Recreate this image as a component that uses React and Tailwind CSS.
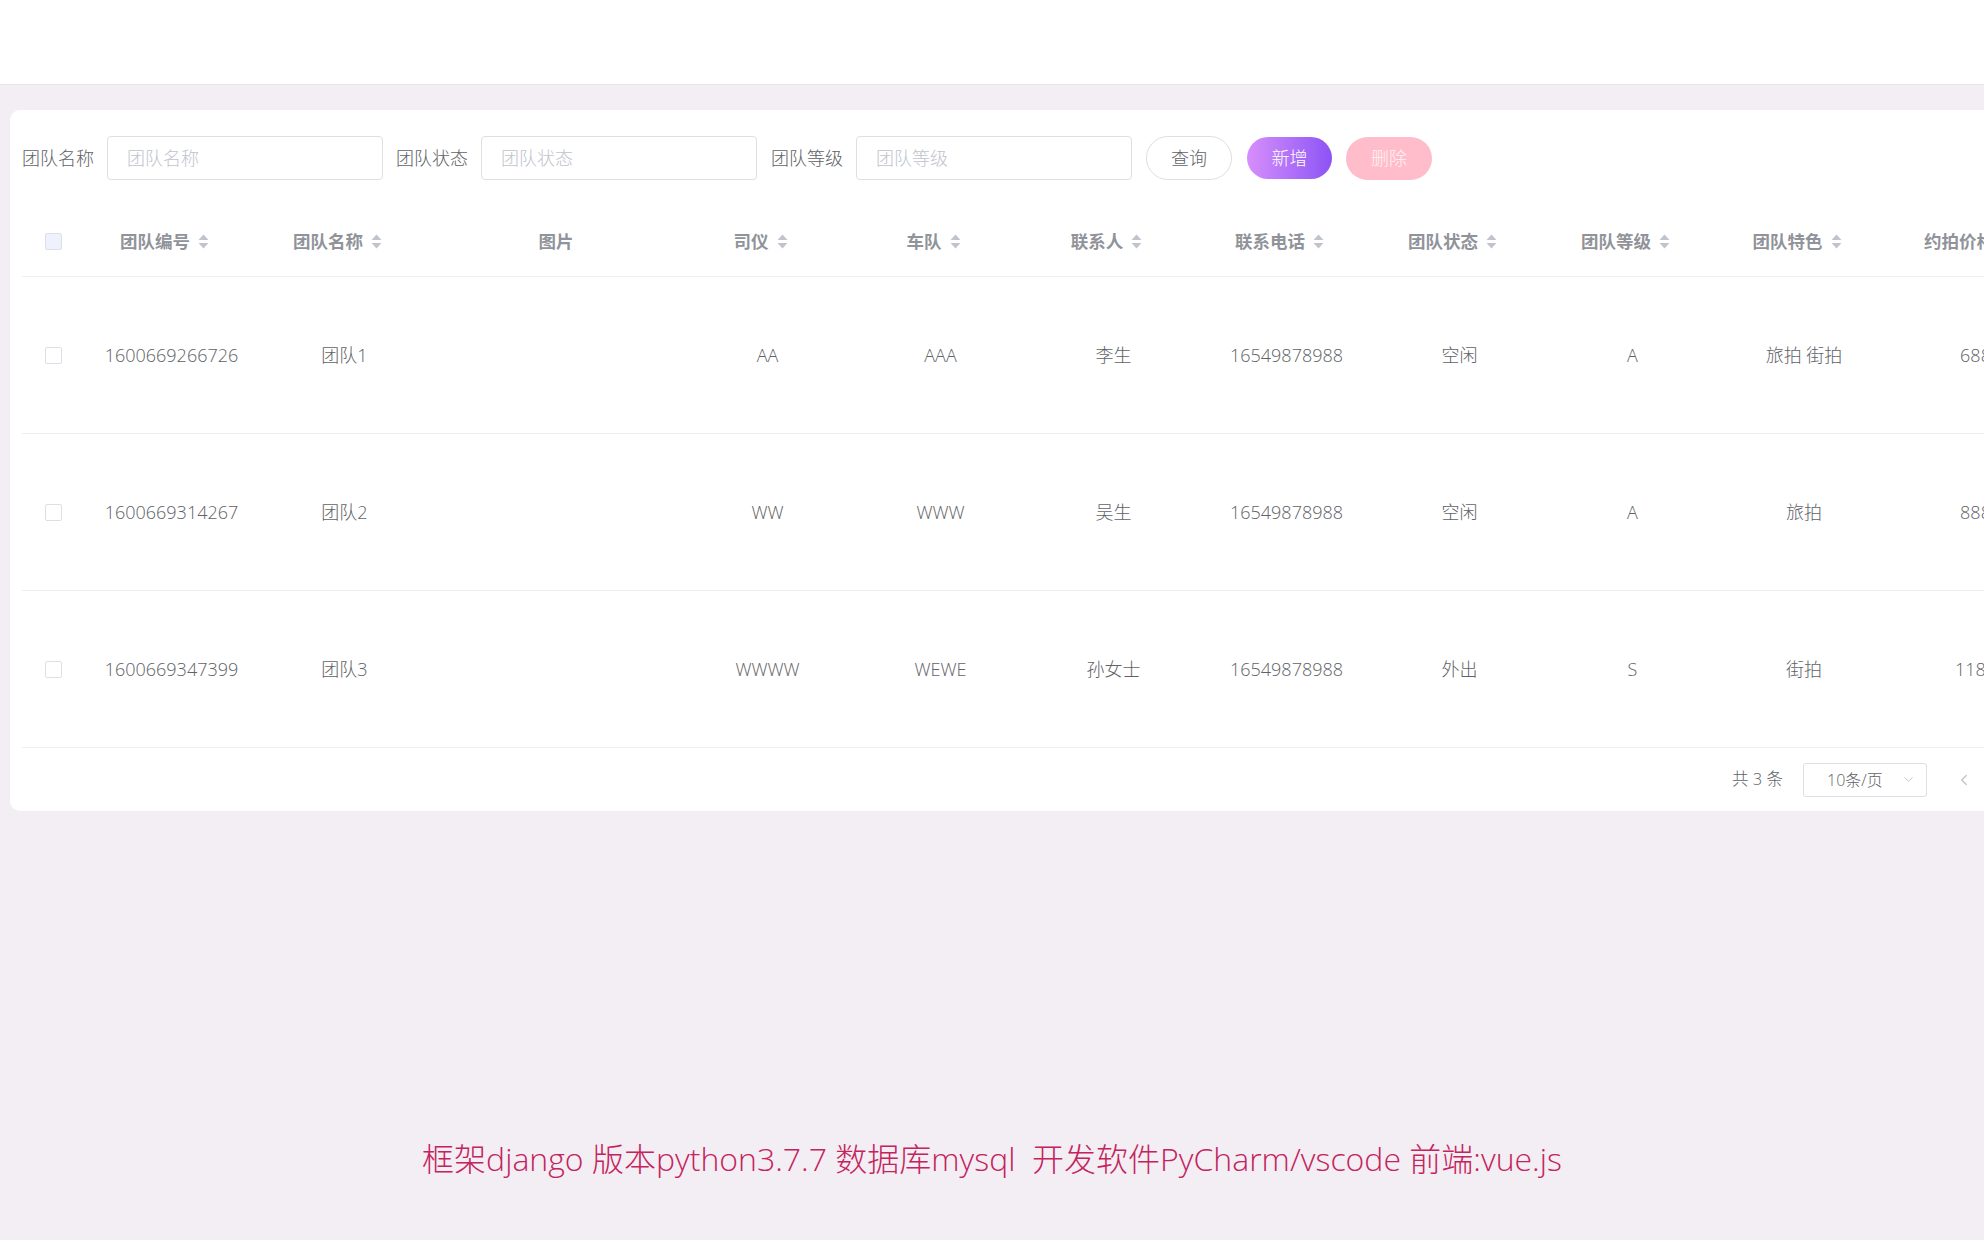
import React from 'react';
import { ChevronDown, ChevronLeft, ChevronRight } from 'lucide-react';

function Caret() {
  return (
    <svg width="11" height="15" viewBox="0 0 11 15" className="ml-[8px] shrink-0">
      <path d="M5.5 0.5 L10.5 6 H0.5 Z" fill="#c0c4cc" />
      <path d="M0.5 9 H10.5 L5.5 14.5 Z" fill="#c0c4cc" />
    </svg>
  );
}

function Checkbox({ header }) {
  return (
    <span
      className={
        'block w-[17px] h-[17px] rounded-[2px] border border-[#dcdfe6] ' +
        (header ? 'bg-[#edf2fc]' : 'bg-white')
      }
    />
  );
}

const headers = [
  { t: '团队编号', s: true },
  { t: '团队名称', s: true },
  { t: '图片', s: false },
  { t: '司仪', s: true },
  { t: '车队', s: true },
  { t: '联系人', s: true },
  { t: '联系电话', s: true },
  { t: '团队状态', s: true },
  { t: '团队等级', s: true },
  { t: '团队特色', s: true },
  { t: '约拍价格', s: true },
];

const rows = [
  ['1600669266726', '团队1', '', 'AA', 'AAA', '李生', '16549878988', '空闲', 'A', '旅拍 街拍', '688'],
  ['1600669314267', '团队2', '', 'WW', 'WWW', '吴生', '16549878988', '空闲', 'A', '旅拍', '888'],
  ['1600669347399', '团队3', '', 'WWWW', 'WEWE', '孙女士', '16549878988', '外出', 'S', '街拍', '1188'],
];

const gridCols =
  'grid grid-cols-[63px_173px_173px_250px_173px_173px_173px_173px_173px_173px_170px_173px]';

function Field({ label, ml }) {
  return (
    <div className={'flex items-center ' + ml}>
      <span className="text-[18px] text-[#606266] whitespace-nowrap">{label}</span>
      <div className="ml-[13px] w-[276px] h-[44px] border border-[#dcdfe6] rounded-[4px] flex items-center pl-[19px] bg-white">
        <span className="text-[18px] text-[#c0c4cc]">{label}</span>
      </div>
    </div>
  );
}

export default function App() {
  return (
    <div className="w-full h-[1240px] overflow-hidden bg-[#f3edf4] font-light font-['Open_Sans','Noto_Sans_CJK_SC',sans-serif]">
      <div className="h-[85px] bg-white border-b border-[#e8e4ea]" />
      <div className="pt-[25px] pl-[10px]">
        <div className="w-[2067px] bg-white rounded-[10px] px-[12px] pt-[26px]">
          {/* filter row */}
          <div className="flex items-center h-[44px]">
            <Field label="团队名称" ml="" />
            <Field label="团队状态" ml="ml-[13px]" />
            <Field label="团队等级" ml="ml-[14px]" />
            <button className="ml-[14px] w-[86px] h-[44px] rounded-full border border-[#dcdfe6] bg-white text-[18px] text-[#606266]">
              查询
            </button>
            <button className="ml-[15px] w-[85px] h-[42px] rounded-full bg-linear-to-r from-[#d88efb] to-[#8d52f4] text-[18px] text-white">
              新增
            </button>
            <button className="ml-[14px] w-[86px] h-[43px] rounded-full bg-[#ffbccb] text-[18px] text-[#fff3f6]">
              删除
            </button>
          </div>

          {/* table */}
          <div className="mt-[27px] overflow-hidden">
            <div className={gridCols + ' h-[70px] border-b border-[#ebeef5] items-center'}>
              <div className="flex justify-center">
                <Checkbox header />
              </div>
              {headers.map((h) => (
                <div
                  key={h.t}
                  className={'flex items-center justify-center ' + (h.s ? 'pr-[14px]' : '')}
                >
                  <span className="text-[17.5px] font-bold text-[#909399] whitespace-nowrap">{h.t}</span>
                  {h.s && <Caret />}
                </div>
              ))}
            </div>
            {rows.map((r, i) => (
              <div key={i} className={gridCols + ' h-[157px] border-b border-[#ebeef5] items-center'}>
                <div className="flex justify-center">
                  <Checkbox />
                </div>
                {r.map((c, j) => (
                  <div key={j} className="text-center text-[18px] text-[#606266] whitespace-nowrap">
                    {c}
                  </div>
                ))}
              </div>
            ))}
          </div>

          {/* pagination */}
          <div className="h-[63px] flex items-center justify-end pr-[10px]">
            <span className="text-[16.5px] text-[#606266] mr-[20px]">共 3 条</span>
            <div className="w-[124px] h-[34px] border border-[#dcdfe6] rounded-[3px] flex items-center justify-between pl-[23px] pr-[10px]">
              <span className="text-[16px] text-[#606266]">10条/页</span>
              <ChevronDown size={15} color="#c0c4cc" strokeWidth={1.5} />
            </div>
            <div className="ml-[22px] w-[30px] h-[34px] flex items-center justify-center">
              <ChevronLeft size={18} color="#c0c4cc" strokeWidth={1.8} />
            </div>
            <div className="ml-[8px] w-[30px] h-[34px] flex items-center justify-center text-[16px] text-[#409eff] font-bold">
              1
            </div>
            <div className="ml-[8px] w-[30px] h-[34px] flex items-center justify-center">
              <ChevronRight size={18} color="#c0c4cc" strokeWidth={1.8} />
            </div>
          </div>
        </div>

        <div className="mt-[326px] -ml-[10px] text-center text-[32px] leading-[44px] text-[#c4245c] whitespace-pre">
          {'框架django 版本python3.7.7 数据库mysql  开发软件PyCharm/vscode 前端:vue.js'}
        </div>
      </div>
    </div>
  );
}
